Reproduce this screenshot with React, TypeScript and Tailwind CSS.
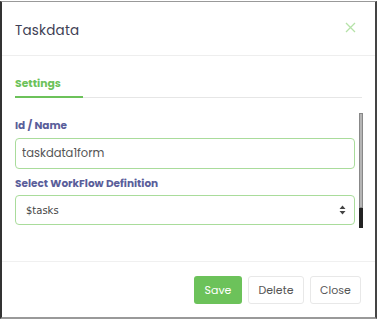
export default function App() {
  const font = { fontFamily: "Poppins, 'Open Sans', 'Noto Sans', sans-serif" };
  return (
    <div className="w-[379px] h-[319px] bg-white overflow-hidden" style={font}>
      <div className="relative w-[377px] h-[318px] mt-px border-l-2 border-r-2 border-t border-b-2 border-l-[#333] border-r-[#444] border-t-[#999] border-b-[#999] bg-white flex flex-col">
        {/* header */}
        <div className="h-[54px] flex items-center justify-between pl-[13px] pr-[19px] border-b border-[#eeeeee]">
          <h2 className="text-[13.5px] text-[#3f3f55] tracking-[0.2px] mt-[6px]">Taskdata</h2>
          <svg width="11" height="11" viewBox="0 0 11 11" className="mb-[2px]">
            <path d="M1 1L10 10M10 1L1 10" stroke="#b5e2a8" strokeWidth="1.3" />
          </svg>
        </div>

        {/* body */}
        <div className="relative flex-1 pl-[13px] pr-[13px]">
          <div className="flex border-b border-[#e6e6e6] mt-[19px]">
            <div className="text-[10.8px] font-bold text-[#6cc25a] pb-[4px] pt-[1px] w-[68px] border-b-2 border-[#6cc25a] -mb-px">
              Settings
            </div>
          </div>

          <div className="pr-[7px]">
            <label className="block text-[10.5px] font-bold text-[#5a5e9a] mt-[20px] leading-[16px]">Id / Name</label>
            <input
              readOnly
              value="taskdata1form"
              className="mt-[4px] w-full h-[31px] rounded-[4px] border border-[#a9dc9b] px-[6px] text-[11.5px] text-[#555] outline-none"
              style={font}
            />
            <label className="block text-[10.5px] font-bold text-[#5a5e9a] mt-[7px] leading-[16px]">
              Select WorkFlow Definition
            </label>
            <div className="mt-[3px] w-full h-[30px] rounded-[4px] border border-[#a9dc9b] pl-[10px] pr-[8px] flex items-center justify-between text-[10px] text-[#444]">
              <span style={{ fontFamily: "'DejaVu Sans', 'Noto Sans', sans-serif" }}>$tasks</span>
              <svg width="7" height="10" viewBox="0 0 7 10">
                <path d="M3.5 0.5L6.5 4H0.5Z M3.5 9.5L6.5 6H0.5Z" fill="#444" />
              </svg>
            </div>
          </div>

          {/* scrollbar */}
          <div className="absolute right-[12px] top-[57px] w-[4px] h-[115px] flex flex-col">
            <div className="flex-1 bg-[#b5b5b5] border border-[#888]" />
            <div className="h-[20px] bg-[#222]" />
          </div>
        </div>

        {/* footer */}
        <div className="h-[56px] border-t border-[#f0f0f0] flex items-start justify-end gap-[5px] pr-[14px] pt-[14px]">
          <button className="h-[28px] w-[48px] rounded-[3px] bg-[#6cc25a] text-white text-[11px]">Save</button>
          <button className="h-[28px] w-[56px] ml-[1px] rounded-[3px] border border-[#e8e8e8] bg-white text-[#555] text-[11px]">
            Delete
          </button>
          <button className="h-[28px] w-[51px] ml-[1px] rounded-[3px] border border-[#e8e8e8] bg-white text-[#555] text-[11px]">
            Close
          </button>
        </div>
      </div>
    </div>
  );
}
